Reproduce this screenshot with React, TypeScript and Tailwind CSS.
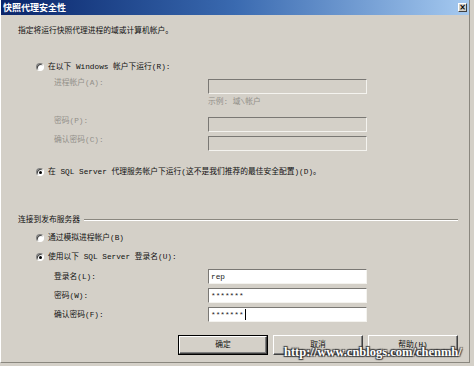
import React from "react";

const font = "font-['Liberation_Mono','Noto_Sans_CJK_SC',monospace] text-[7.75px]";

function Radio({ checked, label }: { checked?: boolean; label: string }) {
  return (
    <div className="flex h-[12px] items-center pl-[35px]">
      <span className="flex h-[8px] w-[8px] items-center justify-center rounded-full border border-t-[#808080] border-l-[#808080] border-r-white border-b-white bg-white shadow-[inset_1px_1px_0_#404040]">
        {checked && <span className="h-[3px] w-[3px] rounded-full bg-black" />}
      </span>
      <span className="ml-[4px] leading-[12px] text-[#111]">{label}</span>
    </div>
  );
}

function Field({
  label,
  value,
  disabled,
  caret,
}: {
  label: string;
  value?: string;
  disabled?: boolean;
  caret?: boolean;
}) {
  return (
    <div
      className={`flex h-[15px] pl-[53px] ${disabled ? "items-start" : "items-center"}`}
    >
      <span
        className={`w-[154px] ${disabled ? "leading-[9px] text-[#928f89]" : "leading-[12px] text-[#111]"}`}
      >
        {label}
      </span>
      <div
        className={`flex h-[15px] w-[159px] items-center border border-t-[#7a7874] border-l-[#7a7874] border-r-[#f4f3ef] border-b-[#f4f3ef] pl-[2px] ${
          disabled ? "bg-[#d4d0c8]" : "bg-white"
        }`}
      >
        {value && <span className="leading-[12px] text-[#222]">{value}</span>}
        {caret && <span className="ml-[1px] h-[11px] w-[1px] bg-black" />}
      </div>
    </div>
  );
}

function Button({ label, primary }: { label: string; primary?: boolean }) {
  return (
    <div
      className={`flex h-[20px] w-[90px] ${primary ? "border border-black" : ""}`}
    >
      <div className="flex flex-1 items-center justify-center border border-t-white border-l-white border-r-[#404040] border-b-[#404040] bg-[#d4d0c8] shadow-[inset_-1px_-1px_0_#808080] leading-[12px] text-[#111]">
        {label}
      </div>
    </div>
  );
}

export default function App() {
  return (
    <div
      className={`relative h-[366px] w-[474px] overflow-hidden bg-[#d4d0c8] ${font}`}
    >
      <div className="flex h-[363px] w-[470px] flex-col border-l border-l-white border-r border-r-[#8a877f] border-b border-b-[#8a877f]">
        <div className="flex h-[15px] items-center justify-between bg-gradient-to-r from-[#0a246a] via-[#3a6ab0] to-[#a6caf0] pl-[2px] pr-[2px]">
          <span className="font-['Noto_Sans_CJK_SC',sans-serif] text-[9px] font-bold leading-[15px] text-white">
            快照代理安全性
          </span>
          <span className="flex h-[9px] w-[9px] items-center justify-center border border-t-white border-l-white border-r-[#404040] border-b-[#404040] bg-[#d4d0c8] font-['DejaVu_Sans',sans-serif] text-[8px] font-bold leading-none text-black">
            ×
          </span>
        </div>

        <div className="mt-[10px] h-[12px] pl-[17px] leading-[12px] text-[#111]">
          指定将运行快照代理进程的域或计算机帐户。
        </div>

        <div className="mt-[24px]">
          <Radio label="在以下 Windows 帐户下运行(R):" />
        </div>
        <div className="mt-[6px]">
          <Field label="进程帐户(A):" disabled />
        </div>
        <div className="mt-[2px] h-[12px] pl-[207px] leading-[12px] text-[#928f89]">
          示例: 域\帐户
        </div>
        <div className="mt-[9px]">
          <Field label="密码(P):" disabled />
        </div>
        <div className="mt-[4px]">
          <Field label="确认密码(C):" disabled />
        </div>
        <div className="mt-[15px]">
          <Radio
            checked
            label="在 SQL Server 代理服务帐户下运行(这不是我们推荐的最佳安全配置)(D)。"
          />
        </div>

        <div className="mt-[36px] flex h-[12px] items-center pl-[17px] pr-[11px]">
          <span className="leading-[12px] text-[#111]">连接到发布服务器</span>
          <span className="ml-[4px] h-[2px] flex-1 border-t border-t-[#8a877f] border-b border-b-white" />
        </div>
        <div className="mt-[6px]">
          <Radio label="通过模拟进程帐户(B)" />
        </div>
        <div className="mt-[7px]">
          <Radio checked label="使用以下 SQL Server 登录名(U):" />
        </div>
        <div className="mt-[6px]">
          <Field label="登录名(L):" value="rep" />
        </div>
        <div className="mt-[4px]">
          <Field label="密码(W):" value="*******" />
        </div>
        <div className="mt-[4px]">
          <Field label="确认密码(F):" value="*******" caret />
        </div>

        <div className="mt-[13px] flex gap-[5px] pl-[177px]">
          <Button label="确定" primary />
          <Button label="取消" />
          <Button label="帮助(H)" />
        </div>
      </div>

      <div className="absolute left-[284px] top-[344px] whitespace-nowrap font-['Liberation_Serif',serif] text-[12.5px] font-bold leading-[16px] text-white [text-shadow:1px_1px_1px_#3a3a3a,-1px_-1px_1px_#3a3a3a,1px_-1px_1px_#3a3a3a,-1px_1px_1px_#3a3a3a]">
        http://www.cnblogs.com/chenmh/
      </div>
    </div>
  );
}
